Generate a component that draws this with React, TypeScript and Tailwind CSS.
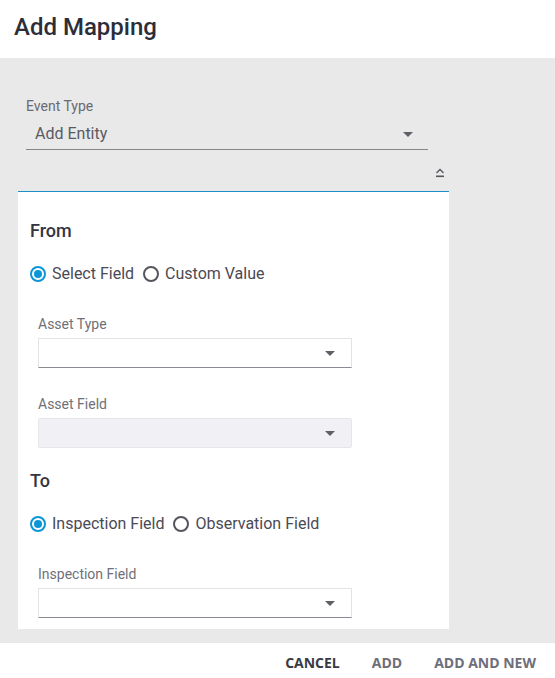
import React from "react";

function Caret({ className = "" }: { className?: string }) {
  return (
    <svg width="10" height="5" viewBox="0 0 10 5" className={className}>
      <path d="M0 0 L10 0 L5 5 Z" fill="#5f5f66" />
    </svg>
  );
}

function Radio({ checked, label }: { checked: boolean; label: string }) {
  return (
    <label className="flex items-center gap-[6px]">
      {checked ? (
        <span className="w-[16px] h-[16px] rounded-full border-2 border-[#0b96d8] flex items-center justify-center">
          <span className="w-[8px] h-[8px] rounded-full bg-[#0b96d8]" />
        </span>
      ) : (
        <span className="w-[16px] h-[16px] rounded-full border-2 border-[#55555e]" />
      )}
      <span className="text-[16px] leading-[24px] text-[#4a4a55]">{label}</span>
    </label>
  );
}

function SelectBox({ label, disabled = false }: { label: string; disabled?: boolean }) {
  return (
    <div className="ml-[8px]">
      <div className="text-[14px] leading-[16px] text-[#707078]">{label}</div>
      <div
        className={
          disabled
            ? "mt-[6px] w-[314px] h-[30px] bg-[#f1f1f5] border border-[#e6e6ea] rounded-[2px] flex items-center justify-end pr-[16px]"
            : "mt-[6px] w-[314px] h-[30px] bg-white border border-[#e3e3e6] border-b-[#8a8a92] flex items-center justify-end pr-[16px]"
        }
      >
        <Caret />
      </div>
    </div>
  );
}

export default function App() {
  return (
    <div
      className="w-[555px] h-[678px] bg-white flex flex-col"
      style={{ fontFamily: "Roboto, 'Liberation Sans', sans-serif" }}
    >
      <div className="h-[58px] px-[14px] flex items-center pb-[4px]">
        <h1 className="text-[24px] font-medium text-[#2d2d3a] leading-[28px]">Add Mapping</h1>
      </div>
      <div className="bg-[#e9e9e9] pt-[40px] pb-[14px] flex-1">
        <div className="ml-[26px] w-[402px]">
          <div className="text-[14px] leading-[16px] text-[#6a6a72]">Event Type</div>
          <div className="h-[36px] border-b border-[#85858c] flex items-center justify-between pl-[9px] pr-[15px] pt-[5px]">
            <span className="text-[16px] text-[#5a5a63]">Add Entity</span>
            <Caret className="mt-[1px]" />
          </div>
        </div>
        <div className="w-[449px] h-[41px] flex items-center justify-end pr-[4px] pt-[4px]">
          <svg width="10" height="10" viewBox="0 0 10 10">
            <path d="M1.5 5 L5 1.5 L8.5 5" fill="none" stroke="#55555e" strokeWidth="1.3" />
            <rect x="1" y="7.5" width="8" height="1.6" fill="#55555e" />
          </svg>
        </div>
        <div className="ml-[18px] w-[431px] bg-white border-t border-[#1a8fc8] pt-[27px] pb-[11px] px-[12px]">
          <div className="text-[18px] leading-[24px] font-medium text-[#35353f]">From</div>
          <div className="mt-[19px] flex items-center gap-[9px]">
            <Radio checked label="Select Field" />
            <Radio checked={false} label="Custom Value" />
          </div>
          <div className="mt-[30px]">
            <SelectBox label="Asset Type" />
          </div>
          <div className="mt-[28px]">
            <SelectBox label="Asset Field" disabled />
          </div>
          <div className="mt-[21px] text-[18px] leading-[24px] font-medium text-[#35353f]">To</div>
          <div className="mt-[19px] flex items-center gap-[9px]">
            <Radio checked label="Inspection Field" />
            <Radio checked={false} label="Observation Field" />
          </div>
          <div className="mt-[30px]">
            <SelectBox label="Inspection Field" />
          </div>
        </div>
      </div>
      <div
        className="h-[35px] flex items-center justify-end gap-[32px] pr-[19px] pt-[4px]"
        style={{ fontFamily: "'Open Sans', 'Liberation Sans', sans-serif" }}
      >
        <span className="text-[14px] font-bold text-[#3a3a45]">CANCEL</span>
        <span className="text-[14px] font-bold text-[#6e6e7a]">ADD</span>
        <span className="text-[14px] font-bold text-[#6e6e7a]">ADD AND NEW</span>
      </div>
    </div>
  );
}
